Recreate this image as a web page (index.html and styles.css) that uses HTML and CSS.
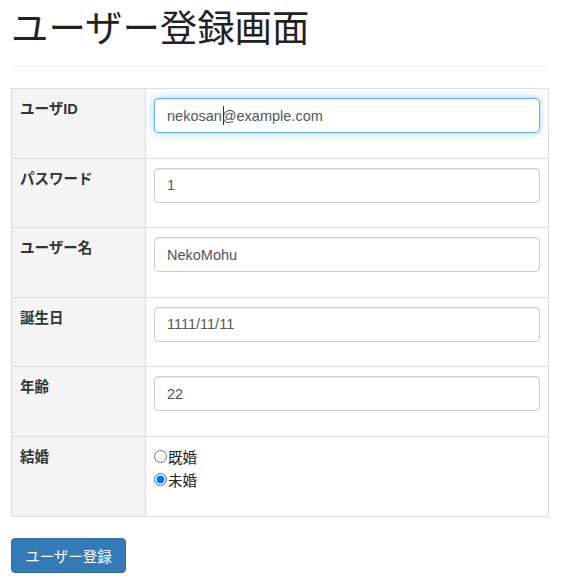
FILE: index.html
```html
<!DOCTYPE html>
<html lang="ja">
<head>
<meta charset="utf-8">
<title>ユーザー登録画面</title>
<link rel="stylesheet" href="styles.css">
</head>
<body>
<div class="page">
  <h1 class="title">ユーザー登録画面</h1>
  <hr class="divider">
  <form class="reg-form">
    <table class="reg-table">
      <tr>
        <th>ユーザID</th>
        <td><div class="field-wrap"><input class="field focused" type="text" value="nekosan@example.com"><span class="caret"></span></div></td>
      </tr>
      <tr>
        <th>パスワード</th>
        <td><input class="field" type="text" value="1"></td>
      </tr>
      <tr>
        <th>ユーザー名</th>
        <td><input class="field" type="text" value="NekoMohu"></td>
      </tr>
      <tr>
        <th>誕生日</th>
        <td><input class="field" type="text" value="1111/11/11"></td>
      </tr>
      <tr>
        <th>年齢</th>
        <td><input class="field" type="text" value="22"></td>
      </tr>
      <tr>
        <th>結婚</th>
        <td>
          <div class="radios">
            <label class="radio-line"><input class="radio" type="radio" name="married">既婚</label>
            <label class="radio-line"><input class="radio" type="radio" name="married" checked>未婚</label>
          </div>
        </td>
      </tr>
    </table>
    <button class="btn-primary" type="button">ユーザー登録</button>
  </form>
</div>
</body>
</html>
```

FILE: styles.css
```css
html, body {
  margin: 0;
  padding: 0;
  background: #fff;
}
body {
  font-family: "Liberation Sans", "Noto Sans CJK JP", sans-serif;
  font-size: 14.5px;
  color: #333;
}
.page {
  width: 538px;
  padding: 0 11px;
}
.title {
  margin: 1.5px 0 0;
  font-family: "Noto Sans CJK JP", sans-serif;
  font-size: 37.4px;
  line-height: 48px;
  font-weight: 400;
  color: #222;
}
.divider {
  margin: 16.5px 0 21px;
  border: 0;
  border-top: 1px solid #eee;
  height: 0;
}
.reg-form {
  margin: 0;
}
.reg-table {
  width: 538px;
  border-collapse: collapse;
  border: 1px solid #ddd;
}
.reg-table th,
.reg-table td {
  border: 1px solid #ddd;
  vertical-align: top;
  padding: 9px 8px 8px;
  text-align: left;
}
.reg-table th {
  width: 117px;
  background: #f4f4f4;
  font-weight: 700;
  line-height: 20px;
  padding-top: 10px;
}
.field-wrap {
  position: relative;
}
.caret {
  position: absolute;
  left: 69px;
  top: 8px;
  width: 1px;
  height: 19px;
  background: #333;
}
.field {
  display: block;
  box-sizing: border-box;
  width: 100%;
  height: 35px;
  margin: 0 0 16.6px;
  padding: 6px 12px;
  font-family: "Liberation Sans", "Noto Sans CJK JP", sans-serif;
  font-size: 14.5px;
  color: #555;
  background: #fff;
  border: 1px solid #ccc;
  border-radius: 4px;
  box-shadow: inset 0 1px 1px rgba(0,0,0,.075);
  outline: none;
}
.field.focused {
  border-color: #66afe9;
  box-shadow: inset 0 1px 1px rgba(0,0,0,.075), 0 0 8px rgba(102,175,233,.6);
}
.radios {
  margin-top: -1px;
  padding: 0 0 17px;
}
.radio-line {
  display: flex;
  align-items: center;
  height: 23px;
  font-family: "Noto Sans CJK JP", sans-serif;
  font-size: 14.5px;
  color: #222;
}
.radio {
  margin: 0 1px 0 0;
  width: 13px;
  height: 13px;
}
.btn-primary {
  display: block;
  margin-top: 21px;
  width: 115px;
  height: 35px;
  padding: 0;
  font-family: "Noto Sans CJK JP", sans-serif;
  font-size: 14.5px;
  color: #fff;
  background: #337ab7;
  border: 1px solid #2e6da4;
  border-radius: 4px;
}
```
